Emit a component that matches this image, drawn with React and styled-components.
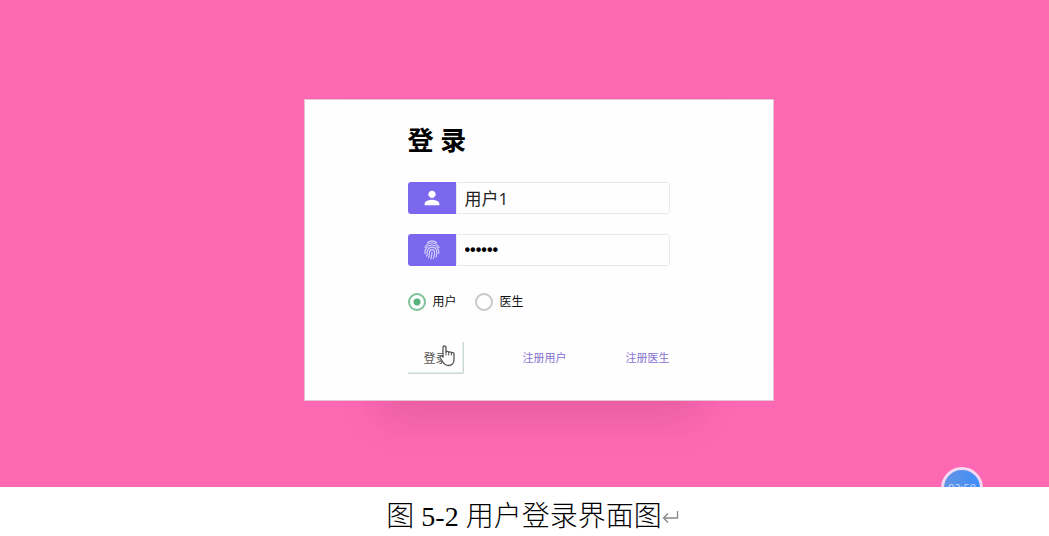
import React, { useState } from "react";
import styled, { createGlobalStyle } from "styled-components";
import { MdPerson } from "react-icons/md";

const GlobalStyle = createGlobalStyle`
  *, *::before, *::after { box-sizing: border-box; }
  body {
    margin: 0;
    background: #fff;
    color: #111;
    font-family: "Open Sans", "Noto Sans CJK SC", sans-serif;
  }
`;

const Stage = styled.main`
  position: relative;
  display: flex;
  justify-content: center;
  padding: 99px 0 86px 28px;
  overflow: hidden;
  background: #ff69b4;
`;

const Card = styled.form`
  display: flex;
  flex-direction: column;
  width: 470px;
  max-width: 100%;
  padding: 20px 103px 26px;
  border: 1px solid #e6c3d6;
  background: #fefefe;
  box-shadow: 0 92px 40px -72px rgba(0, 0, 0, 0.1), 0 0 30px -24px rgba(0, 0, 0, 0.1);
`;

const Title = styled.h1`
  margin: 0 0 22px;
  color: #000;
  font-size: 26px;
  line-height: 40px;
  font-weight: 700;
`;

const Field = styled.label`
  display: flex;
  height: 32px;
  margin-bottom: 20px;
  border-radius: 3px;
  overflow: hidden;
`;

const FieldIcon = styled.span`
  display: flex;
  flex: 0 0 48px;
  align-items: center;
  justify-content: center;
  background: #7b68ee;
  color: ${(p) => p.$tint};
`;

const Input = styled.input`
  flex: 1;
  min-width: 0;
  padding: 2px 8px 0;
  border: 1px solid #e9e9eb;
  border-radius: 0 3px 3px 0;
  outline: none;
  background: #fefefe;
  color: #222;
  font: 17px/28px "Open Sans", "Noto Sans CJK SC", sans-serif;

  &[type="password"] {
    padding-top: 0;
    color: #000;
    font: 700 16px/28px "Liberation Sans", sans-serif;
  }
`;

const Roles = styled.div`
  display: flex;
  gap: 18px;
  height: 32px;
`;

const Role = styled.label`
  display: flex;
  align-items: center;
  gap: 7px;
  color: #111;
  font-size: 12px;
  line-height: 32px;
`;

const Radio = styled.input`
  appearance: none;
  width: 18px;
  height: 18px;
  margin: 0;
  border: 2px solid #cbc5cb;
  border-radius: 50%;
  background: #fefefe;

  &:checked {
    border-color: #7cc398;
    background: radial-gradient(circle, #55b07a 3px, #fefefe 4px);
  }
`;

const Actions = styled.div`
  display: flex;
  align-items: center;
  justify-content: space-between;
  margin-top: 24px;
`;

const Submit = styled.button`
  position: relative;
  width: 56px;
  height: 32px;
  padding: 0 0 0 16px;
  border: 0 solid #c9d6d6;
  border-width: 0 1px 1px 0;
  border-radius: 0 0 2px 0;
  box-shadow: inset -1px -1px 0 #e6eded;
  background: #fefefe;
  color: #555;
  font: 12px/32px "Noto Sans CJK SC", sans-serif;
  text-align: left;
`;

const Pointer = styled.svg`
  position: absolute;
  top: 3px;
  left: 31px;
  width: 16px;
  height: 22px;
`;

const Link = styled.a`
  color: #8670d0;
  font-size: 11px;
  line-height: 30px;
  text-decoration: none;
`;

const Clock = styled.div`
  position: absolute;
  right: 66px;
  bottom: -22px;
  width: 42px;
  height: 42px;
  border: 3px solid #f3d9f3;
  border-radius: 50%;
  background: linear-gradient(90deg, #6494e2, #3f8dfa);
  color: #c5dcfb;
  font: 11px/36px "Open Sans", sans-serif;
  text-align: center;
`;

const Caption = styled.p`
  display: flex;
  align-items: center;
  justify-content: center;
  margin: 0;
  padding: 11px 0 0 16px;
  color: #000;
  font: 300 28px/38px "Liberation Serif", "Noto Sans CJK SC", serif;
`;

const ReturnMark = styled.svg`
  width: 17px;
  height: 18px;
`;

const links = ["注册用户", "注册医生"];
const roles = ["用户", "医生"];

function Fingerprint() {
  return (
    <svg
      width="16" height="20" viewBox="0 0 16 20" aria-hidden="true"
      fill="none" stroke="currentColor" strokeWidth="1.2" strokeLinecap="round"
    >
      <path d="M3.500 2.600C6.200.6 9.800.6 12.500 2.600" />
      <path d="M1 7.500C2.300 4.500 4.700 3 8 3s5.700 1.500 7 4.500" />
      <path d="M1 13.500C.6 9 3 5.200 8 5.200s7.200 3.600 6.800 8.300" />
      <path d="M2.600 16c1-1.200.4-2.700.6-4.300C3.500 9 5.300 7.400 8 7.400s4.700 1.900 4.800 4.700c.1 1.600-.1 3.200-.7 4.900" />
      <path d="M4.600 17.700c1-1.700.6-3.700.8-5.300.2-1.800 1.200-2.800 2.600-2.800s2.600 1.200 2.600 3c0 2-.4 4-1.200 6" />
      <path d="M6.800 18.700c.8-1.900 1.100-4 1.200-6.500" />
    </svg>
  );
}

export default function App() {
  const [role, setRole] = useState(roles[0]);

  return (
    <>
      <GlobalStyle />
      <Stage>
        <Card onSubmit={(e) => e.preventDefault()}>
          <Title>登 录</Title>
          <Field>
            <FieldIcon $tint="#fff"><MdPerson size={22} aria-hidden="true" /></FieldIcon>
            <Input type="text" aria-label="用户名" defaultValue="用户1" />
          </Field>
          <Field>
            <FieldIcon $tint="#d5cffa"><Fingerprint /></FieldIcon>
            <Input type="password" aria-label="密码" defaultValue="123456" />
          </Field>
          <Roles>
            {roles.map((name) => (
              <Role key={name}>
                <Radio type="radio" name="role" checked={role === name} onChange={() => setRole(name)} />
                {name}
              </Role>
            ))}
          </Roles>
          <Actions>
            <Submit type="submit">
              登录
              <Pointer viewBox="0 0 16 22" aria-hidden="true">
                <path
                  d="M4 12V2.500a1.500 1.500 0 0 1 3 0V7c.4-1 2.500-.9 2.700.4C10.300 6.500 12.200 6.700 12.400 8c.7-.8 2.600-.4 2.600 1.200V14c0 4-1.500 6.500-5.500 6.500-3.200 0-4.500-1.500-6-4L1.200 13C.4 11.400 2 10.200 3.200 11.300z"
                  fill="#fefefe" stroke="#555" strokeWidth="1.300" strokeLinejoin="round"
                />
                <path d="M7 7v3.500M9.700 7.400v3.100M12.400 8v2.500" stroke="#555" fill="none" />
              </Pointer>
            </Submit>
            {links.map((text) => <Link key={text} href="#">{text}</Link>)}
          </Actions>
        </Card>
        <Clock>02:58</Clock>
      </Stage>
      <Caption>
        图 5-2 用户登录界面图
        <ReturnMark viewBox="0 0 17 18" aria-hidden="true">
          <path d="M15.500 3v7H1.500M6 5.500L1.500 10 6 14.500" fill="none" stroke="#888" strokeWidth="1.300" />
        </ReturnMark>
      </Caption>
    </>
  );
}
